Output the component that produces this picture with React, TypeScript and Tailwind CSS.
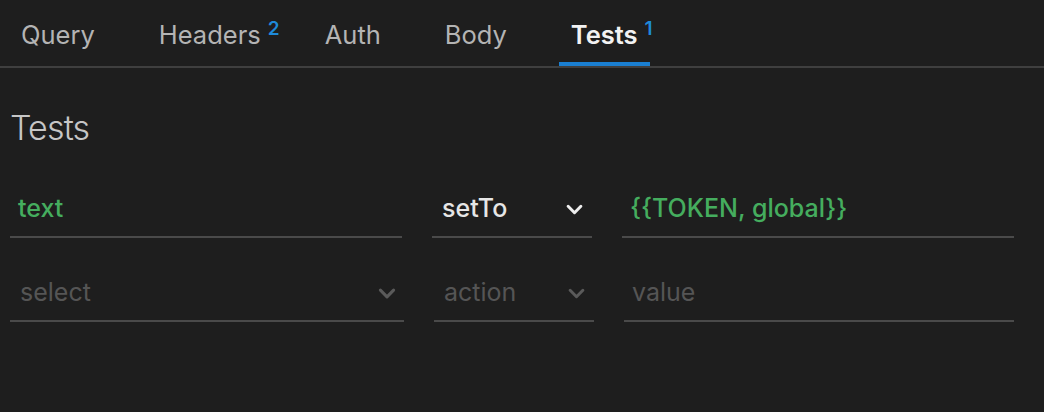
const tabs = [
  { label: "Query" },
  { label: "Headers", count: 2 },
  { label: "Auth" },
  { label: "Body" },
  { label: "Tests", count: 1, active: true },
];

const Chevron = ({ className }: { className: string }) => (
  <svg
    viewBox="0 0 16 10"
    className={className}
    fill="none"
    stroke="currentColor"
    strokeWidth="2.8"
    strokeLinecap="round"
    strokeLinejoin="round"
  >
    <path d="M2 2l6 6 6-6" />
  </svg>
);

const App = () => {
  return (
    <div className="w-[1044px] h-[412px] bg-[#1e1e1e] font-['Inter',sans-serif] overflow-hidden">
      <div className="flex gap-10 pl-[9px] h-[68px] border-b-2 border-[#3f3f3f]">
        {tabs.map((tab) => (
          <div
            key={tab.label}
            className={`relative flex items-center px-3 pt-2 border-b-4 ${
              tab.active
                ? "border-[#1a7fd1] text-[#f2f2f2] font-semibold"
                : "border-transparent text-[#b4b4b4]"
            } text-[25.5px]`}
          >
            {tab.label}
            {tab.count && (
              <span className="absolute left-full top-[15px] -ml-[5px] text-[19px] font-semibold text-[#1e8ad9]">
                {tab.count}
              </span>
            )}
          </div>
        ))}
      </div>
      <div className="pl-[10px] pr-[30px] pt-[40px]">
        <h2 className="h-[40px] leading-[40px] text-[34px] font-light text-[#c6c6c6] tracking-tight">
          Tests
        </h2>
        <div className="mt-[34px] flex gap-[30px]">
          <div className="w-[392px] h-[56px] flex items-center pl-2 border-b-2 border-[#4a4a4a] text-[25px] font-medium text-[#45ad5e]">
            text
          </div>
          <div className="w-[160px] h-[56px] flex items-center justify-between pl-[10px] pr-[9px] border-b-2 border-[#4a4a4a] text-[25px] font-medium text-[#e6e6e6]">
            setTo
            <Chevron className="w-[17px] h-[11px] text-[#eeeeee]" />
          </div>
          <div className="w-[392px] h-[56px] flex items-center pl-2 border-b-2 border-[#4a4a4a] text-[25px] font-medium text-[#45ad5e]">
            {"{{TOKEN, global}}"}
          </div>
        </div>
        <div className="mt-[28px] flex gap-[30px]">
          <div className="w-[394px] h-[56px] flex items-center justify-between pl-[10px] pr-[8px] border-b-2 border-[#4a4a4a] text-[25px] text-[#555555]">
            select
            <Chevron className="w-[18px] h-[11px] text-[#5a5a5a]" />
          </div>
          <div className="w-[160px] h-[56px] flex items-center justify-between pl-[10px] pr-[9px] border-b-2 border-[#4a4a4a] text-[25px] text-[#555555]">
            action
            <Chevron className="w-[17px] h-[11px] text-[#5a5a5a]" />
          </div>
          <div className="w-[390px] h-[56px] flex items-center pl-2 border-b-2 border-[#4a4a4a] text-[25px] text-[#555555]">
            value
          </div>
        </div>
      </div>
    </div>
  );
};

export default App;
